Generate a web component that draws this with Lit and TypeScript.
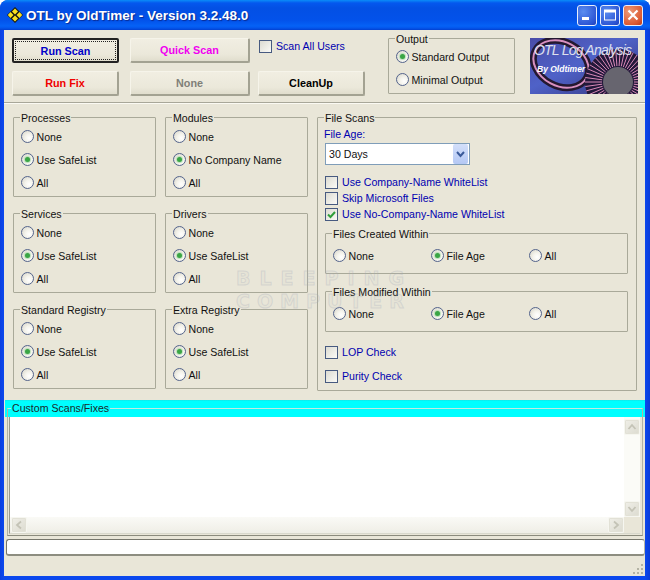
import { LitElement, html, css, svg } from "lit";
import { customElement } from "lit/decorators.js";

type Box = { title: string; options: string[]; checked: number };

const boxes: Box[] = [
  { title: "Processes", options: ["None", "Use SafeList", "All"], checked: 1 },
  { title: "Modules", options: ["None", "No Company Name", "All"], checked: 1 },
  { title: "Services", options: ["None", "Use SafeList", "All"], checked: 1 },
  { title: "Drivers", options: ["None", "Use SafeList", "All"], checked: 1 },
  { title: "Standard Registry", options: ["None", "Use SafeList", "All"], checked: 1 },
  { title: "Extra Registry", options: ["None", "Use SafeList", "All"], checked: 1 },
];

const radio = (label: string, on = false) => html`
  <label class="opt"><span class="radio ${on ? "on" : ""}"></span><span>${label}</span></label>
`;

const check = (label: string, on = false) => html`
  <label class="opt blue">
    <span class="check">
      ${on
        ? html`<svg viewBox="0 0 11 11" width="11" height="11"><path d="M2 5.5 L4.5 8 L9 3" fill="none" stroke="#2f9e3a" stroke-width="2"/></svg>`
        : ""}
    </span>
    <span>${label}</span>
  </label>
`;

const ticks = Array.from({ length: 46 }, (_, i) => {
  const a = (Math.PI * 2 * i) / 46;
  const cx = 88, cy = 44, r1 = 16, r2 = 33;
  return svg`<line x1=${cx + r1 * Math.cos(a)} y1=${cy + r1 * Math.sin(a)} x2=${cx + r2 * Math.cos(a)} y2=${cy + r2 * Math.sin(a)} stroke="#d98ab8" stroke-width="1"/>`;
});

@customElement("app-root")
export class AppRoot extends LitElement {
  static styles = css`
    :host {
      display: block;
      width: 650px;
      height: 580px;
      background: #fff;
      font: 10.6px "Liberation Sans", Arial, sans-serif;
      color: #111;
      overflow: hidden;
    }
    * { box-sizing: border-box; }
    .window {
      position: relative;
      height: 580px;
      display: flex;
      flex-direction: column;
      background: linear-gradient(90deg, #0a3fe0 0, #0b48ee 4px, #0b48ee 645px, #0b3cd8 650px);
      border-radius: 8px 8px 0 0;
      overflow: hidden;
    }
    .titlebar {
      flex: none;
      height: 30px;
      display: flex;
      align-items: center;
      padding: 0 7px 0 7px;
      background: linear-gradient(#0a8cf8 0, #0458ee 3px, #0350e4 8px, #0352ea 20px, #0562f6 26px, #0456ec 28px, #0340d0 30px);
    }
    .title {
      margin-left: 3px;
      color: #fff;
      font: bold 13.5px "Liberation Sans", Arial, sans-serif;
      text-shadow: 1px 1px 1px #0a2a90;
      white-space: nowrap;
    }
    .controls { margin-left: auto; display: flex; gap: 3px; }
    .wbtn {
      width: 20px;
      height: 21px;
      border: 1px solid #e8eefc;
      border-radius: 3px;
      background: radial-gradient(circle at 30% 30%, #5b8df0, #2c55d4 75%, #1f3fb8);
      display: flex;
      align-items: center;
      justify-content: center;
    }
    .wbtn.close { background: radial-gradient(circle at 30% 30%, #ec9a78, #dc5a32 70%, #bf3a16); }

    .client {
      position: relative;
      flex: 1;
      margin: 0 5px 4px 4px;
      background: #e9e6d8;
      display: flex;
      flex-direction: column;
    }
    .toolbar {
      flex: none;
      height: 73px;
      display: flex;
      padding: 8px 0 0 8px;
      border-bottom: 1px solid #a8a799;
      box-shadow: 0 1px 0 #fbfaf3;
    }
    .col { display: flex; flex-direction: column; width: 107px; gap: 8px; }
    .col.b { width: 120px; margin: 0 8px 0 11px; }
    .btn {
      height: 25px;
      display: flex;
      align-items: center;
      justify-content: center;
      font-weight: bold;
      font-size: 10.8px;
      border-radius: 2px;
      background: linear-gradient(#f1eee2, #ebe8da 70%, #e0ddcd);
      border: 1px solid #f6f4ea;
      border-right: 2px solid #a3a292;
      border-bottom: 2px solid #a3a292;
    }
    .btn.focus { border: 2px solid #222; padding: 1px; }
    .btn.focus span {
      flex: 1;
      align-self: stretch;
      display: flex;
      align-items: center;
      justify-content: center;
      border: 1px dotted #222;
    }
    .scan-all { height: 25px; padding: 1px 0 0 1px; }
    .group {
      position: relative;
      border: 1px solid #a9a999;
      border-radius: 1px;
    }
    .legend {
      position: absolute;
      top: -6px;
      left: 6px;
      padding: 0 1px;
      height: 12px;
      line-height: 12px;
      background: #e9e6d8;
      white-space: nowrap;
    }
    .output {
      width: 127px;
      height: 56px;
      margin-left: 23px;
      padding: 6px 0 0 7px;
      display: flex;
      flex-direction: column;
    }
    .logo { margin-left: 15px; width: 108px; height: 56px; display: block; }
    .opt { display: flex; align-items: center; height: 23px; gap: 2.5px; white-space: nowrap; }
    .scan-all .opt { height: 14px; gap: 4px; }
    .blue { color: #0000b0; }
    .radio {
      position: relative;
      flex: none;
      width: 13px;
      height: 13px;
      border-radius: 50%;
      border: 1px solid #54648c;
      background: radial-gradient(circle at 65% 65%, #fff 0, #f4f3ec 40%, #d4d2c6 100%);
    }
    .radio.on::after {
      content: "";
      position: absolute;
      left: 3px;
      top: 3px;
      width: 5px;
      height: 5px;
      border-radius: 50%;
      background: #3aa545;
      box-shadow: 0 0 1px 1px #b8dfb6;
    }
    .check {
      flex: none;
      width: 13px;
      height: 13px;
      border: 1px solid #475a80;
      background: linear-gradient(135deg, #dcdbd2, #fafaf6);
      display: block;
    }
    .check svg { display: block; }

    .main {
      flex: none;
      height: 297px;
      padding: 14px 0 0 9px;
      display: grid;
      grid-template-columns: 143px 143px 320px;
      grid-template-rows: 80px 80px 80px;
      gap: 16px 9px;
    }
    .small { padding: 7px 0 0 7px; }
    .files {
      grid-column: 3;
      grid-row: 1 / span 3;
      margin-bottom: -2px;
      padding: 9px 8px 0 7px;
    }
    .age { height: 14px; line-height: 14px; margin-left: -1px; }
    .combo {
      width: 145px;
      height: 22px;
      margin-top: 2px;
      border: 1px solid #7f9db9;
      background: #fff;
      display: flex;
      align-items: center;
      padding-left: 3px;
    }
    .arrow {
      margin-left: auto;
      margin-right: 1px;
      width: 15px;
      height: 20px;
      border-radius: 2px;
      background: linear-gradient(#d3dffa, #b4c8f4);
      display: flex;
      align-items: center;
      justify-content: center;
    }
    .checks { margin-top: 9px; display: flex; flex-direction: column; }
    .checks .opt { height: 16px; gap: 4px; }
    .inner {
      height: 41px;
      display: grid;
      grid-template-columns: 98px 98px 1fr;
      align-items: center;
      padding: 4px 0 0 7px;
    }
    .inner.created { margin-top: 11px; }
    .inner.modified { margin-top: 17px; }
    .checks2 { margin-top: 8px; display: flex; flex-direction: column; gap: 0; }
    .checks2 .opt { height: 24px; gap: 4px; }

    .custom {
      flex: none;
      height: 136px;
      margin: 0 0 0 1px;
      padding: 8px 2px 0 2px;
      background: linear-gradient(#19dede 0, #00ffff 1px, #00ffff 17px, #e9e6d8 17px);
    }
    .frame {
      position: relative;
      height: 128px;
      border: 1px solid #b2b2a2;
      border-top-color: #c4e8e0;
      border-bottom-color: #8b8b7d;
      padding: 8px 2px 1px 1px;
    }
    .legend.cyan { background: #00ffff; left: 3px; top: -7px; color: #1a2a2a; }
    .editor {
      height: 100%;
      display: grid;
      grid-template-columns: 1fr 16px;
      grid-template-rows: 1fr 16px;
      background: #fff;
      border-left: 1px solid #9a9a8c;
      border-bottom: 1px solid #d8d8cc;
    }
    .vbar {
      display: flex;
      flex-direction: column;
      justify-content: space-between;
      padding-top: 2px;
      background: #fbfbf7;
    }
    .hbar {
      display: flex;
      justify-content: space-between;
      background: linear-gradient(#fafaf6, #efeee6);
      padding-left: 1px;
    }
    .corner { background: #e9e6d8; }
    .sb {
      width: 16px;
      height: 16px;
      border: 1px solid #f6f6f0;
      border-radius: 2px;
      background: linear-gradient(135deg, #f0efe8, #dcdbd0);
      box-shadow: 0 0 0 1px #e2e1d6 inset;
      display: flex;
      align-items: center;
      justify-content: center;
    }
    .status {
      flex: none;
      height: 17px;
      margin: 3px 0 0 2px;
      background: #fff;
      border: 1px solid #77776c;
      border-right-color: #b5b5a8;
      border-bottom: 2px solid #8d8d80;
      border-radius: 3px;
    }
    .foot { flex: 1; display: flex; justify-content: flex-end; align-items: flex-end; padding: 0 1px 1px 0; }
    .watermark {
      position: absolute;
      left: 232px;
      top: 237px;
      font: bold 19px/23px "DejaVu Sans", sans-serif;
      color: rgba(175, 182, 194, 0.08);
      -webkit-text-stroke: 1px rgba(165, 172, 186, 0.3);
      pointer-events: none;
      white-space: nowrap;
    }
    .wm1 { display: block; letter-spacing: 9px; }
    .wm2 { display: block; letter-spacing: 7px; }
  `;

  private scrollIcon(d: string) {
    return html`<span class="sb"><svg viewBox="0 0 10 10" width="10" height="10"><path d=${d} fill="none" stroke="#c4c3b6" stroke-width="1.8"/></svg></span>`;
  }

  render() {
    return html`
      <div class="window">
        <div class="titlebar">
          <svg width="16" height="16" viewBox="0 0 16 16">
            <path d="M8 0 L16 8 L8 16 L0 8 Z" fill="#1a1a10"/>
            <path d="M8 1.5 L11 4.5 L8 7.5 L5 4.5 Z M3.5 5 L6.5 8 L3.5 11 L.8 8 Z M12.5 5 L15.2 8 L12.5 11 L9.5 8 Z M8 8.5 L11 11.5 L8 14.5 L5 11.5 Z" fill="#f8e020"/>
          </svg>
          <span class="title">OTL by OldTimer - Version 3.2.48.0</span>
          <div class="controls">
            <span class="wbtn"><svg width="14" height="14" viewBox="0 0 14 14"><rect x="2" y="9" width="7" height="3" fill="#fff"/></svg></span>
            <span class="wbtn"><svg width="14" height="14" viewBox="0 0 14 14"><rect x="1.5" y="2" width="11" height="10" fill="none" stroke="#fff" stroke-width="1"/><rect x="1.5" y="2" width="11" height="2.5" fill="#fff"/></svg></span>
            <span class="wbtn close"><svg width="14" height="14" viewBox="0 0 14 14"><path d="M2.5 2.5 L11.5 11.5 M11.5 2.5 L2.5 11.5" stroke="#fff" stroke-width="2.2"/></svg></span>
          </div>
        </div>
        <div class="client">
          <div class="toolbar">
            <div class="col">
              <div class="btn focus" style="color:#0000c8"><span>Run Scan</span></div>
              <div class="btn" style="color:#f00000">Run Fix</div>
            </div>
            <div class="col b">
              <div class="btn" style="color:#f000f0">Quick Scan</div>
              <div class="btn" style="color:#808078">None</div>
            </div>
            <div class="col">
              <div class="scan-all">${check("Scan All Users")}</div>
              <div class="btn" style="color:#000">CleanUp</div>
            </div>
            <div class="group output">
              <span class="legend">Output</span>
              ${radio("Standard Output", true)}
              ${radio("Minimal Output")}
            </div>
            <svg class="logo" viewBox="0 0 108 56">
              <defs>
                <linearGradient id="lg" x1="0" y1="0" x2="1" y2="1">
                  <stop offset="0" stop-color="#4a4ca8"/>
                  <stop offset=".45" stop-color="#4f62c8"/>
                  <stop offset="1" stop-color="#33357c"/>
                </linearGradient>
              </defs>
              <rect width="108" height="56" fill="url(#lg)"/>
              <ellipse cx="31" cy="26" rx="29" ry="22" transform="rotate(28 31 26)" fill="none" stroke="#241830" stroke-width="7"/>
              <ellipse cx="31" cy="26" rx="29" ry="22" transform="rotate(28 31 26)" fill="none" stroke="#d890c0" stroke-width="2"/>
              <circle cx="88" cy="44" r="33" fill="#22183a"/>
              ${ticks}
              <circle cx="88" cy="44" r="15" fill="#67656f"/>
              <text x="4" y="17" font-family="Liberation Sans" font-style="italic" font-size="14" fill="#dfe0ee" textLength="98">OTL Log Analysis</text>
              <text x="7" y="34" font-family="Liberation Sans" font-style="italic" font-weight="bold" font-size="8.5" fill="#fff">By Oldtimer</text>
            </svg>
          </div>

          <div class="main">
            ${boxes.slice(0, 2).map((b) => this.box(b))}
            <div class="group files">
              <span class="legend">File Scans</span>
              <div class="age blue">File Age:</div>
              <div class="combo">
                <span>30 Days</span>
                <span class="arrow"><svg width="11" height="9" viewBox="0 0 11 9"><path d="M2 2 L5.5 6 L9 2" fill="none" stroke="#3a5a9a" stroke-width="2"/></svg></span>
              </div>
              <div class="checks">
                ${check("Use Company-Name WhiteList")}
                ${check("Skip Microsoft Files")}
                ${check("Use No-Company-Name WhiteList", true)}
              </div>
              <div class="group inner created">
                <span class="legend">Files Created Within</span>
                ${radio("None")}${radio("File Age", true)}${radio("All")}
              </div>
              <div class="group inner modified">
                <span class="legend">Files Modified Within</span>
                ${radio("None")}${radio("File Age", true)}${radio("All")}
              </div>
              <div class="checks2">
                ${check("LOP Check")}
                ${check("Purity Check")}
              </div>
            </div>
            ${boxes.slice(2).map((b) => this.box(b))}
          </div>

          <div class="custom">
            <div class="frame">
              <span class="legend cyan">Custom Scans/Fixes</span>
              <div class="editor">
                <div></div>
                <div class="vbar">
                  ${this.scrollIcon("M1.5 7 L5 3 L8.5 7")}
                  ${this.scrollIcon("M1.5 3 L5 7 L8.5 3")}
                </div>
                <div class="hbar">
                  ${this.scrollIcon("M7 1.5 L3 5 L7 8.5")}
                  ${this.scrollIcon("M3 1.5 L7 5 L3 8.5")}
                </div>
                <div class="corner"></div>
              </div>
            </div>
          </div>
          <div class="status"></div>
          <div class="foot">
            <svg width="12" height="12" viewBox="0 0 12 12">
              <g fill="#b4b3a4">
                <rect x="9" y="1" width="2" height="2"/>
                <rect x="5" y="5" width="2" height="2"/><rect x="9" y="5" width="2" height="2"/>
                <rect x="1" y="9" width="2" height="2"/><rect x="5" y="9" width="2" height="2"/><rect x="9" y="9" width="2" height="2"/>
              </g>
            </svg>
          </div>
          <div class="watermark"><span class="wm1">BLEEPING</span><span class="wm2">COMPUTER</span></div>
        </div>
      </div>
    `;
  }

  private box(b: Box) {
    return html`
      <div class="group small">
        <span class="legend">${b.title}</span>
        ${b.options.map((o, i) => radio(o, i === b.checked))}
      </div>
    `;
  }
}
